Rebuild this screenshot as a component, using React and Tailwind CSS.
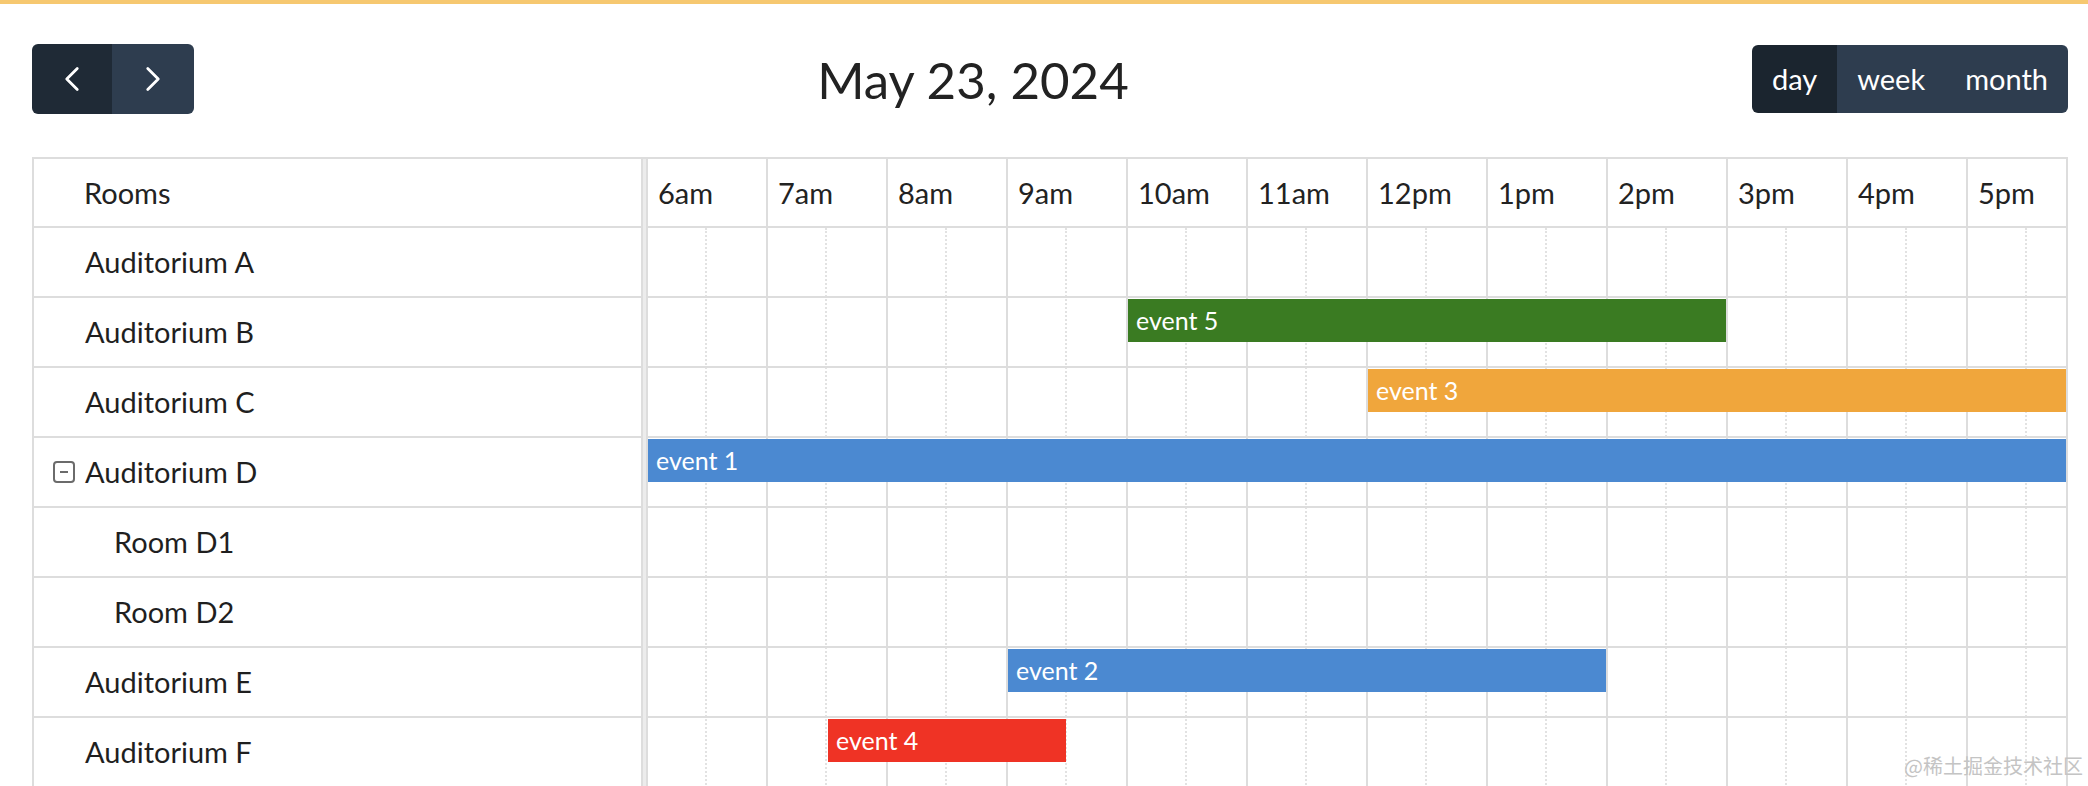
import { ChevronLeft, ChevronRight } from "lucide-react";

// hour columns shown in the day timeline
const slots = ["6am", "7am", "8am", "9am", "10am", "11am", "12pm", "1pm", "2pm", "3pm", "4pm", "5pm"];

const resources = [
  { id: "a", title: "Auditorium A" },
  { id: "b", title: "Auditorium B" },
  { id: "c", title: "Auditorium C" },
  { id: "d", title: "Auditorium D", expanded: true },
  { id: "d1", title: "Room D1", child: true },
  { id: "d2", title: "Room D2", child: true },
  { id: "e", title: "Auditorium E" },
  { id: "f", title: "Auditorium F" },
];

const events = [
  { resource: "b", title: "event 5", start: 10, end: 15, color: "#3a7b22" },
  { resource: "c", title: "event 3", start: 12, end: 20, color: "#f0a63c" },
  { resource: "d", title: "event 1", start: 6, end: 20, color: "#4b89d1" },
  { resource: "e", title: "event 2", start: 9, end: 14, color: "#4b89d1" },
  { resource: "f", title: "event 4", start: 7.5, end: 9.5, color: "#ef3325" },
];

const SLOT_WIDTH = 120;

const ExpanderIcon = () => (
  <svg width="22" height="22" viewBox="0 0 22 22" fill="none">
    <rect x="1" y="1" width="20" height="20" rx="3" stroke="#6b6b6b" strokeWidth="2" />
    <line x1="7" y1="11" x2="15" y2="11" stroke="#6b6b6b" strokeWidth="2" />
  </svg>
);

const App = () => {
  return (
    <div className="relative h-[786px] overflow-hidden bg-white text-[#222] font-['Lato',sans-serif]">
      {/* top accent */}
      <div className="h-[4px] bg-[#f6c870]" />

      <div className="pl-8 pr-[20px] pt-10">
        {/* Toolbar */}
        <div className="flex items-center justify-between h-[70px] mb-[43px]">
          <div className="flex h-[70px] rounded-md overflow-hidden">
            <button className="w-[80px] h-full flex items-center justify-center bg-[#1f2a36] text-white">
              <ChevronLeft size={42} strokeWidth={1.6} />
            </button>
            <button className="w-[82px] h-full flex items-center justify-center bg-[#2e3d4f] text-white">
              <ChevronRight size={42} strokeWidth={1.6} />
            </button>
          </div>

          <h2 className="text-[51px] leading-none text-[#222]">May 23, 2024</h2>

          <div className="flex h-[68px] rounded-md overflow-hidden text-[29px] text-white">
            <button className="px-5 bg-[#1b252f]">day</button>
            <button className="px-5 bg-[#2e3d4f]">week</button>
            <button className="px-5 bg-[#2e3d4f]">month</button>
          </div>
        </div>

        {/* Resource timeline */}
        <div className="flex border-2 border-[#ddd] text-[29px]">
          {/* resource column */}
          <div className="w-[607px] shrink-0">
            <div className="h-[69px] border-b-2 border-[#ddd] flex items-center pl-[50px]">Rooms</div>
            {resources.map((r) => (
              <div key={r.id} className="h-[70px] border-b-2 border-[#ddd] flex items-center pl-[19px]">
                <div className="w-[22px] mr-[10px] flex items-center">{r.expanded && <ExpanderIcon />}</div>
                {r.child && <div className="w-[29px]" />}
                <span className="text-[#1f1f1f]">{r.title}</span>
              </div>
            ))}
          </div>

          {/* divider */}
          <div className="w-[7px] shrink-0 border-x-2 border-[#ddd] bg-[#ececec]" />

          {/* timeline */}
          <div className="flex-1 overflow-hidden">
            <div className="w-[1440px]">
              <div className="flex h-[69px] border-b-2 border-[#ddd]">
                {slots.map((s) => (
                  <div key={s} className="w-[120px] shrink-0 border-r-2 border-[#ddd] flex items-center pl-[10px]">
                    {s}
                  </div>
                ))}
              </div>

              <div className="relative">
                {/* slot lines */}
                <div className="absolute inset-0 flex">
                  {slots.map((s) => (
                    <div key={s} className="w-[120px] shrink-0 border-r-2 border-[#ddd] flex">
                      <div className="w-[59px] border-r-2 border-dotted border-[#e2e2e2]" />
                    </div>
                  ))}
                </div>

                {resources.map((r) => (
                  <div key={r.id} className="relative h-[70px] border-b-2 border-[#ddd]">
                    {events
                      .filter((e) => e.resource === r.id)
                      .map((e) => (
                        <div
                          key={e.title}
                          className="absolute top-[1px] h-[43px] flex items-center pl-2 text-[25px] text-white"
                          style={{
                            left: (e.start - 6) * SLOT_WIDTH,
                            width: (e.end - e.start) * SLOT_WIDTH - 2,
                            backgroundColor: e.color,
                          }}
                        >
                          {e.title}
                        </div>
                      ))}
                  </div>
                ))}
              </div>
            </div>
          </div>
        </div>
      </div>

      {/* watermark */}
      <div className="absolute right-[5px] bottom-[5px] text-[20px] text-[#c4c4c4] font-['Noto_Sans_CJK_SC',sans-serif]">
        @稀土掘金技术社区
      </div>
    </div>
  );
};

export default App;
